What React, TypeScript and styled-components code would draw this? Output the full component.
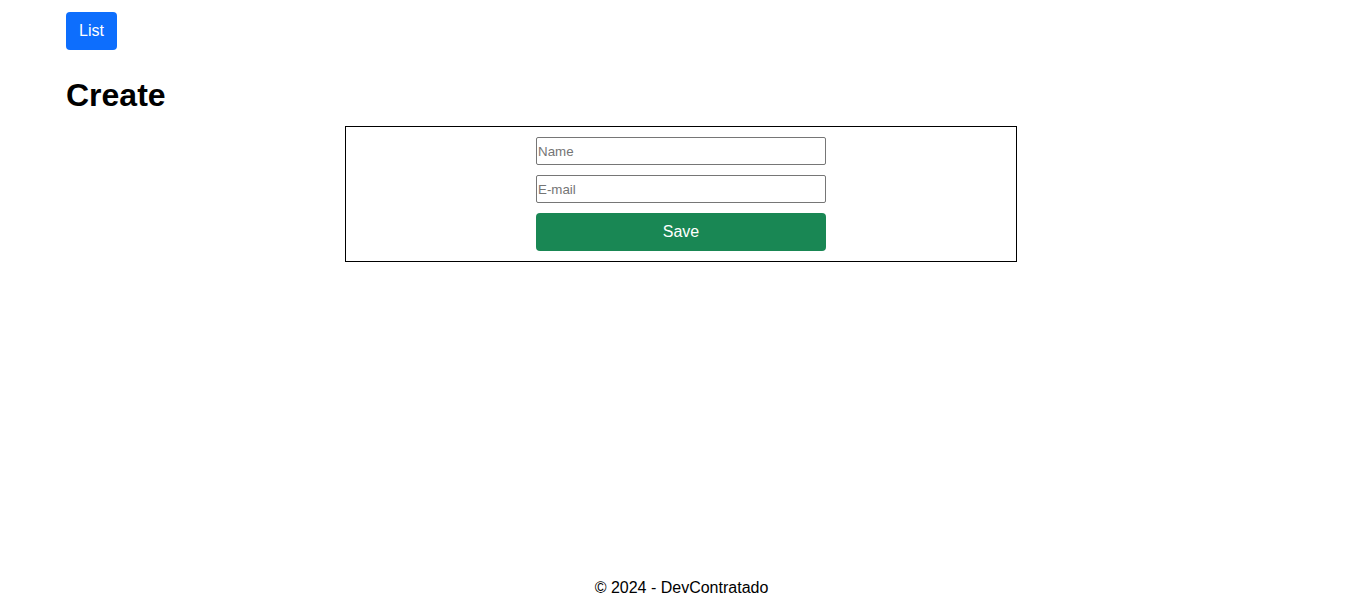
import styled, { createGlobalStyle } from 'styled-components';

const Global = createGlobalStyle`
  html, body {
    margin: 0;
    padding: 0;
    background: #fff;
    color: #000;
    font-family: "Liberation Sans", Arial, sans-serif;
  }
  * { box-sizing: border-box; }
`;

const Page = styled.div`
  height: 100vh;
  overflow: hidden;
  display: flex;
  flex-direction: column;
`;

const Main = styled.main`
  flex: 1;
  padding: 12px 67px 0 66px;
  display: flex;
  flex-direction: column;
`;

const Btn = styled.button<{ $tone: 'primary' | 'success'; $block?: boolean }>`
  display: flex;
  align-items: center;
  justify-content: center;
  height: 38px;
  padding: 0 13px;
  border: none;
  border-radius: 4px;
  background: ${({ $tone }) => ($tone === 'primary' ? '#0d6efd' : '#198754')};
  color: #fff;
  font-family: inherit;
  font-size: 16px;
  cursor: pointer;
  width: ${({ $block }) => ($block ? '100%' : 'auto')};
  align-self: flex-start;
`;

const Heading = styled.h2`
  margin: 26px 0 12px;
  font-size: 32px;
  font-weight: 700;
  line-height: 38px;
`;

const FormBox = styled.form`
  align-self: center;
  width: 672px;
  border: 1px solid #000;
  padding: 10px 0;
  display: flex;
  justify-content: center;
`;

const Fields = styled.div`
  width: 290px;
  display: flex;
  flex-direction: column;
  gap: 10px;
`;

const Input = styled.input`
  height: 28px;
  width: 100%;
  border: 1px solid #767676;
  border-radius: 2px;
  padding: 0 1px;
  font-family: inherit;
  font-size: 13.33px;
  color: #000;

  &::placeholder {
    color: #757575;
  }
`;

const Footer = styled.footer`
  text-align: center;
  font-size: 16px;
  line-height: 14px;
`;

export default function App() {
  return (
    <Page>
      <Global />
      <Main>
        <Btn type="button" $tone="primary">List</Btn>
        <Heading>Create</Heading>
        <FormBox onSubmit={(e) => e.preventDefault()}>
          <Fields>
            <Input type="text" placeholder="Name" />
            <Input type="email" placeholder="E-mail" />
            <Btn type="submit" $tone="success" $block>Save</Btn>
          </Fields>
        </FormBox>
      </Main>
      <Footer>© 2024 - DevContratado</Footer>
    </Page>
  );
}
